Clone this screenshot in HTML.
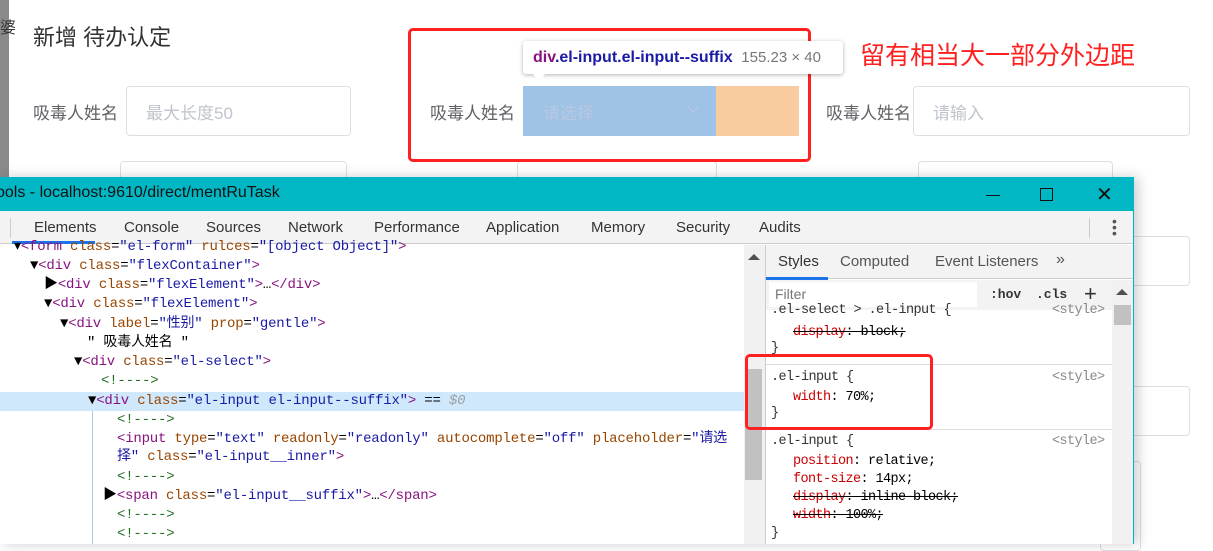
<!DOCTYPE html>
<html><head><meta charset="utf-8"><style>
*{margin:0;padding:0;box-sizing:border-box}
body{width:1213px;height:544px;overflow:hidden;background:#fff;position:relative;font-family:"Liberation Sans","Noto Sans CJK SC",sans-serif}
.a{position:absolute}
.inp{position:absolute;border:1px solid #dcdfe6;border-radius:4px;background:#fff}
.lbl{position:absolute;font-size:17px;color:#606266}
.ph{position:absolute;font-size:17px;color:#c0c4cc}
.mono{font-family:"Liberation Mono","Noto Sans CJK SC",monospace}
.code div{position:absolute;font-size:14px;letter-spacing:-0.2px;white-space:nowrap;line-height:19px}
.t{color:#881280}.n{color:#994500}.v{color:#1a1aa6}.c{color:#236e25}.g{color:#a0a0a0}
.tab{position:absolute;top:219px;font-size:15px;color:#333}
.st div{position:absolute;font-size:13.5px;white-space:nowrap;letter-spacing:-0.6px}
.p{color:#c80000}.s{text-decoration:line-through}
</style></head><body>
<div class="a" style="left:0;top:0;width:9px;height:544px;background:#8a8a8a"></div>
<div class="a" style="left:0;top:14px;font-size:16px;color:#333">婆</div>
<div class="a" style="left:33px;top:20px;font-size:22px;color:#303133">新增 待办认定</div>

<div class="lbl" style="left:33px;top:99px">吸毒人姓名</div>
<div class="inp" style="left:126px;top:86px;width:225px;height:50px"></div>
<div class="ph" style="left:146px;top:99px">最大长度50</div>

<div class="lbl" style="left:430px;top:99px">吸毒人姓名</div>
<div class="a" style="left:523px;top:86px;width:193px;height:50px;background:#9fc2e7"></div>
<div class="a" style="left:716px;top:86px;width:83px;height:50px;background:#f8cc9f"></div>
<div class="ph" style="left:543px;top:99px;color:#b8c8e0">请选择</div>
<div class="a" style="left:689px;top:103px;width:8px;height:8px;border-right:1.5px solid #b8c8e0;border-bottom:1.5px solid #b8c8e0;transform:rotate(45deg)"></div>

<div class="lbl" style="left:826px;top:99px">吸毒人姓名</div>
<div class="inp" style="left:913px;top:86px;width:277px;height:50px"></div>
<div class="ph" style="left:933px;top:99px">请输入</div>

<div class="inp" style="left:120px;top:161px;width:227px;height:40px"></div>
<div class="inp" style="left:517px;top:161px;width:200px;height:40px"></div>
<div class="inp" style="left:918px;top:161px;width:195px;height:40px"></div>
<div class="inp" style="left:1100px;top:236px;width:90px;height:50px"></div>
<div class="inp" style="left:1100px;top:386px;width:90px;height:50px"></div>
<div class="inp" style="left:1100px;top:461px;width:41px;height:90px"></div>

<div class="a" style="left:408px;top:28px;width:403px;height:134px;border:3px solid #ff2020;border-radius:5px"></div>
<div class="a" style="left:523px;top:41px;width:320px;height:33px;background:#fff;border-radius:3px;box-shadow:0 1px 4px rgba(0,0,0,.3)"></div>
<div class="a" style="left:532px;top:73px;width:0;height:0;border-left:7px solid transparent;border-right:7px solid transparent;border-top:8px solid #fff"></div>
<div class="a" style="left:533px;top:49px;font-size:16px;font-weight:bold;color:#1a1aa6;white-space:nowrap"><span style="color:#881280">div</span>.el-input.el-input--suffix <span style="font-weight:normal;color:#777;font-size:15px">&nbsp;155.23 × 40</span></div>
<div class="a" style="left:860px;top:36px;font-size:25px;color:#ff2020;font-family:'Noto Sans CJK SC',sans-serif">留有相当大一部分外边距</div>

<!-- devtools -->
<div class="a" style="left:0;top:177px;width:1134px;height:367px;background:#fff;border-right:1px solid #00b7c3;box-shadow:4px 0 12px rgba(0,0,0,.2)"></div>
<div class="a" style="left:0;top:177px;width:1134px;height:34px;background:#00b7c3"></div>
<div class="a" style="left:-4px;top:184px;font-size:16px;color:#111">ools - localhost:9610/direct/mentRuTask</div>
<div class="a" style="left:986px;top:195px;width:14px;height:1px;background:#111"></div>
<div class="a" style="left:1040px;top:188px;width:13px;height:13px;border:1.3px solid #111"></div>
<div class="a" style="left:1096px;top:186px;font-size:20px;color:#111;line-height:18px">✕</div>
<div class="a" style="left:0;top:211px;width:1133px;height:33px;background:#f3f3f3;border-bottom:1px solid #ccc"></div>
<div class="a" style="left:10px;top:218px;width:1px;height:20px;background:#ccc"></div>
<div class="a" style="left:1089px;top:218px;width:1px;height:20px;background:#ccc"></div>
<div class="a" style="left:1112px;top:218px;font-size:14px;color:#555;line-height:6px">•<br>•<br>•</div>
<div class="tab" style="left:34px">Elements</div>
<div class="tab" style="left:124px">Console</div>
<div class="tab" style="left:206px">Sources</div>
<div class="tab" style="left:288px">Network</div>
<div class="tab" style="left:374px">Performance</div>
<div class="tab" style="left:486px">Application</div>
<div class="tab" style="left:591px">Memory</div>
<div class="tab" style="left:676px">Security</div>
<div class="tab" style="left:759px">Audits</div>
<div class="a" style="left:12px;top:241px;width:83px;height:3px;background:#1a73e8"></div>

<div class="a" style="left:0;top:392px;width:744px;height:19px;background:#cfe8fc"></div>
<div class="a" style="left:92px;top:411px;width:1px;height:133px;background:#a9c9ec"></div>
<div class="code mono">
<div style="left:14px;top:238px">▾<span class="t">&lt;form</span> <span class="n">class</span>=<span class="v">"el-form"</span> <span class="n">rulces</span>=<span class="v">"[object Object]"</span><span class="t">&gt;</span></div>
<div style="left:30px;top:257px">▼<span class="t">&lt;div</span> <span class="n">class</span>=<span class="v">"flexContainer"</span><span class="t">&gt;</span></div>
<div style="left:44px;top:276px">▶<span class="t">&lt;div</span> <span class="n">class</span>=<span class="v">"flexElement"</span><span class="t">&gt;</span>…<span class="t">&lt;/div&gt;</span></div>
<div style="left:44px;top:295px">▼<span class="t">&lt;div</span> <span class="n">class</span>=<span class="v">"flexElement"</span><span class="t">&gt;</span></div>
<div style="left:60px;top:315px">▼<span class="t">&lt;div</span> <span class="n">label</span>=<span class="v">"性别"</span> <span class="n">prop</span>=<span class="v">"gentle"</span><span class="t">&gt;</span></div>
<div style="left:87px;top:334px">" 吸毒人姓名 "</div>
<div style="left:74px;top:353px">▼<span class="t">&lt;div</span> <span class="n">class</span>=<span class="v">"el-select"</span><span class="t">&gt;</span></div>
<div style="left:101px;top:372px" class="c">&lt;!----&gt;</div>
<div style="left:88px;top:392px">▼<span class="t">&lt;div</span> <span class="n">class</span>=<span class="v">"el-input el-input--suffix"</span><span class="t">&gt;</span> == <i class="g">$0</i></div>
<div style="left:117px;top:411px" class="c">&lt;!----&gt;</div>
<div style="left:117px;top:430px"><span class="t">&lt;input</span> <span class="n">type</span>=<span class="v">"text"</span> <span class="n">readonly</span>=<span class="v">"readonly"</span> <span class="n">autocomplete</span>=<span class="v">"off"</span> <span class="n">placeholder</span>=<span class="v">"请选</span></div>
<div style="left:117px;top:448px"><span class="v">择"</span> <span class="n">class</span>=<span class="v">"el-input__inner"</span><span class="t">&gt;</span></div>
<div style="left:117px;top:468px" class="c">&lt;!----&gt;</div>
<div style="left:103px;top:487px">▶<span class="t">&lt;span</span> <span class="n">class</span>=<span class="v">"el-input__suffix"</span><span class="t">&gt;</span>…<span class="t">&lt;/span&gt;</span></div>
<div style="left:117px;top:506px" class="c">&lt;!----&gt;</div>
<div style="left:117px;top:525px" class="c">&lt;!----&gt;</div>
</div>

<div class="a" style="left:744px;top:245px;width:21px;height:299px;background:#f1f1f1"></div>
<div class="a" style="left:748px;top:254px;width:0;height:0;border-left:6px solid transparent;border-right:6px solid transparent;border-bottom:6px solid #505050"></div>
<div class="a" style="left:745px;top:369px;width:17px;height:111px;background:#c1c1c1"></div>
<div class="a" style="left:765px;top:245px;width:1px;height:299px;background:#ccc"></div>

<div class="a" style="left:766px;top:245px;width:367px;height:34px;background:#f3f3f3;border-bottom:1px solid #ccc"></div>
<div class="a" style="left:778px;top:253px;font-size:15px;color:#333">Styles</div>
<div class="a" style="left:840px;top:253px;font-size:15px;color:#555">Computed</div>
<div class="a" style="left:935px;top:253px;font-size:15px;color:#555">Event Listeners</div>
<div class="a" style="left:1056px;top:251px;font-size:16px;color:#555">»</div>
<div class="a" style="left:766px;top:277px;width:62px;height:3px;background:#1a73e8"></div>
<div class="a" style="left:766px;top:280px;width:346px;height:30px;background:#f3f3f3"></div>
<div class="a" style="left:769px;top:282px;width:208px;height:25px;background:#fff"></div>
<div class="a" style="left:775px;top:286px;font-size:14px;color:#777">Filter</div>
<div class="a mono" style="left:990px;top:287px;font-size:13px;font-weight:bold;color:#333">:hov</div>
<div class="a mono" style="left:1036px;top:287px;font-size:13px;font-weight:bold;color:#333">.cls</div>
<div class="a" style="left:1084px;top:281px;font-size:22px;color:#333">+</div>
<div class="a" style="left:1112px;top:280px;width:21px;height:264px;background:#f1f1f1"></div>
<div class="a" style="left:1116px;top:289px;width:0;height:0;border-left:6px solid transparent;border-right:6px solid transparent;border-bottom:6px solid #505050"></div>
<div class="a" style="left:1114px;top:305px;width:17px;height:20px;background:#c1c1c1"></div>
<div class="a" style="left:766px;top:364px;width:346px;height:1px;background:#ddd"></div>
<div class="a" style="left:766px;top:429px;width:346px;height:1px;background:#ddd"></div>
<div class="st mono">
<div style="left:771px;top:303px;color:#333">.el-select &gt; .el-input {</div>
<div style="left:1052px;top:303px;color:#888">&lt;style&gt;</div>
<div style="left:793px;top:325px" class="s"><span class="p">display</span>: block;</div>
<div style="left:771px;top:341px;color:#333">}</div>
<div style="left:771px;top:370px;color:#333">.el-input {</div>
<div style="left:1052px;top:370px;color:#888">&lt;style&gt;</div>
<div style="left:793px;top:390px"><span class="p">width</span>: 70%;</div>
<div style="left:771px;top:406px;color:#333">}</div>
<div style="left:771px;top:434px;color:#333">.el-input {</div>
<div style="left:1052px;top:434px;color:#888">&lt;style&gt;</div>
<div style="left:793px;top:454px"><span class="p">position</span>: relative;</div>
<div style="left:793px;top:472px"><span class="p">font-size</span>: 14px;</div>
<div style="left:793px;top:490px" class="s"><span class="p">display</span>: inline-block;</div>
<div style="left:793px;top:508px" class="s"><span class="p">width</span>: 100%;</div>
<div style="left:771px;top:526px;color:#333">}</div>
</div>
<div class="a" style="left:745px;top:354px;width:188px;height:76px;border:3px solid #ff2020;border-radius:5px"></div>
</body></html>
